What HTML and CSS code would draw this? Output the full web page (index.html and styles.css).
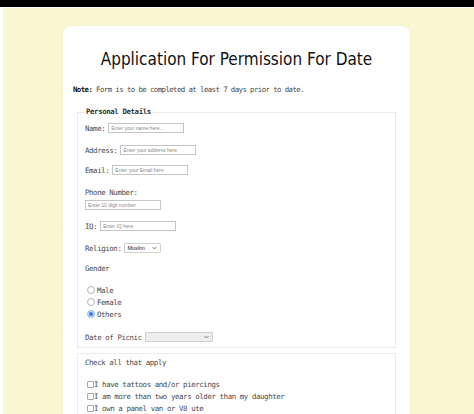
FILE: index.html
```html
<!DOCTYPE html>
<html lang="en">
<head>
<meta charset="utf-8">
<title>Application For Permission For Date</title>
<link rel="stylesheet" href="styles.css">
</head>
<body>
<div class="topbar"></div>
<div class="page">
  <main class="card">
    <h1 class="title">Application For Permission For Date</h1>
    <p class="note"><b>Note:</b> Form is to be completed at least 7 days prior to date.</p>
    <form>
      <fieldset class="box">
        <legend class="legend">Personal Details</legend>
        <div class="fields">
          <div class="row r-name"><label class="lbl" for="name">Name:</label><input class="txt" id="name" placeholder="Enter your name here..."></div>
          <div class="row r-gap12"><label class="lbl" for="addr">Address:</label><input class="txt" id="addr" placeholder="Enter your address here"></div>
          <div class="row r-gap10"><label class="lbl" for="email">Email:</label><input class="txt" id="email" placeholder="Enter your Email here"></div>
          <div class="row r-gap12"><label class="lbl" for="phone">Phone Number:</label></div>
          <div class="row r-gap3"><input class="txt" id="phone" placeholder="Enter 10 digit number"></div>
          <div class="row r-gap11"><label class="lbl" for="iq">IQ:</label><input class="txt" id="iq" placeholder="Enter IQ here"></div>
          <div class="row r-gap12"><label class="lbl" for="rel">Religion:</label>
            <span class="sel sel-rel"><select id="rel"><option>Muslim</option></select><svg class="chev" viewBox="0 0 8 5" width="5" height="4"><path d="M1 1l3 3 3-3" fill="none" stroke="#555" stroke-width="1.3"/></svg></span>
          </div>
          <div class="row r-gap10"><span class="lbl">Gender</span></div>
          <div class="radios">
            <label class="opt"><input type="radio" name="g"> Male</label>
            <label class="opt"><input type="radio" name="g"> Female</label>
            <label class="opt"><input type="radio" name="g" checked> Others</label>
          </div>
          <div class="row r-gap12"><label class="lbl" for="date">Date of Picnic</label>
            <span class="sel sel-date"><select id="date"><option></option></select><svg class="chev" viewBox="0 0 8 5" width="5" height="4"><path d="M1 1l3 3 3-3" fill="none" stroke="#555" stroke-width="1.3"/></svg></span>
          </div>
        </div>
      </fieldset>
      <fieldset class="box box2">
        <div class="check-title">Check all that apply</div>
        <div class="checks">
          <label class="chk"><input type="checkbox">I have tattoos and/or piercings</label>
          <label class="chk"><input type="checkbox">I am more than two years older than my daughter</label>
          <label class="chk"><input type="checkbox">I own a panel van or V8 ute</label>
        </div>
      </fieldset>
    </form>
  </main>
</div>
</body>
</html>
```

FILE: styles.css
```css
html, body {
  margin: 0;
  padding: 0;
  background: #ffffff;
  height: 100%;
  overflow: hidden;
}

body {
  font-family: "DejaVu Sans Mono", monospace;
  color: #4a4a4a;
}

.topbar {
  height: 7px;
  background: #000;
}

.page {
  margin: 1px 0 0 3px;
  padding: 18px 0 0 60px;
  background: #f7f7d1;
  min-height: 420px;
}

.card {
  width: 347px;
  box-sizing: border-box;
  background: #fff;
  border-radius: 8px;
  padding: 0 10px 20px;
  box-shadow: 0 0 2px rgba(0, 0, 0, 0.06);
  min-height: 400px;
}

.title {
  margin: 0;
  padding-top: 23px;
  font-family: "DejaVu Sans", sans-serif;
  font-stretch: condensed;
  font-weight: normal;
  font-size: 17px;
  line-height: 20px;
  text-align: center;
  color: #111;
}

.note,
.legend,
.row,
.radios,
.check-title,
.checks {
  font-size: 7.4px;
  letter-spacing: -0.4px;
}

.note {
  margin: 16px 0 0;
  line-height: 10px;
  letter-spacing: -0.6px;
}

.note b {
  color: #111;
}

form {
  margin: 0;
}

.box {
  margin: 12px 4px 0;
  padding: 0 7px 5px;
  border: 1px solid #ececec;
  min-width: 0;
}

.legend {
  padding: 0 1px;
  font-weight: bold;
  line-height: 10px;
  color: #333;
}

.fields {
  display: flex;
  flex-direction: column;
  padding-top: 6px;
}

.row {
  display: flex;
  align-items: center;
  height: 10px;
  color: #4a4a4a;
}

.r-gap3 { margin-top: 3px; }
.r-gap10 { margin-top: 10px; }
.r-gap11 { margin-top: 11px; }
.r-gap12 { margin-top: 12px; }

.lbl {
  margin-right: 3px;
  color: #4a4a4a;
}

.txt {
  box-sizing: border-box;
  width: 76px;
  height: 10px;
  margin: 0;
  padding: 0 2px;
  border: 1px solid #c4c4c4;
  border-radius: 0;
  font-family: "Liberation Sans", Arial, sans-serif;
  font-size: 5px;
  letter-spacing: 0;
  background: #fff;
}

.txt::placeholder {
  color: #8a8a8a;
}

.sel {
  display: inline-flex;
  align-items: center;
  box-sizing: border-box;
  height: 10px;
  border: 1px solid #cfcfcf;
  border-radius: 1px;
  background: #fff;
  padding-right: 3px;
}

.sel select {
  appearance: none;
  border: none;
  background: transparent;
  font-family: "Liberation Sans", Arial, sans-serif;
  font-size: 5.5px;
  letter-spacing: 0;
  color: #222;
  padding: 0 2px;
  margin: 0;
  height: 8px;
  line-height: 8px;
  flex: 1;
  min-width: 0;
  outline: none;
}

.sel-rel {
  width: 37px;
}

.sel-date {
  width: 68px;
  background: #eeeeee;
}

.chev {
  display: block;
}

.radios {
  display: flex;
  flex-direction: column;
  margin-top: 11px;
  color: #4a4a4a;
}

.opt {
  display: flex;
  align-items: center;
  height: 12px;
}

.opt input {
  appearance: none;
  box-sizing: border-box;
  width: 8px;
  height: 8px;
  margin: 0 2px 0 2px;
  border: 1px solid #b4b4b4;
  border-radius: 50%;
  background: #fff;
}

.opt input:checked {
  border-color: #a9c8f3;
  background: #2a7be6;
  box-shadow: inset 0 0 0 1px #d7e6fb;
}

.box2 {
  margin-top: 5px;
  padding: 4px 7px 5px;
}

.check-title {
  line-height: 10px;
}

.checks {
  display: flex;
  flex-direction: column;
  margin-top: 10px;
}

.chk {
  display: flex;
  align-items: center;
  height: 12px;
}

.chk input {
  appearance: none;
  box-sizing: border-box;
  width: 7px;
  height: 7px;
  margin: 0 0 0 2px;
  border: 1px solid #a8a8a8;
  border-radius: 1px;
  background: #fff;
}
```
